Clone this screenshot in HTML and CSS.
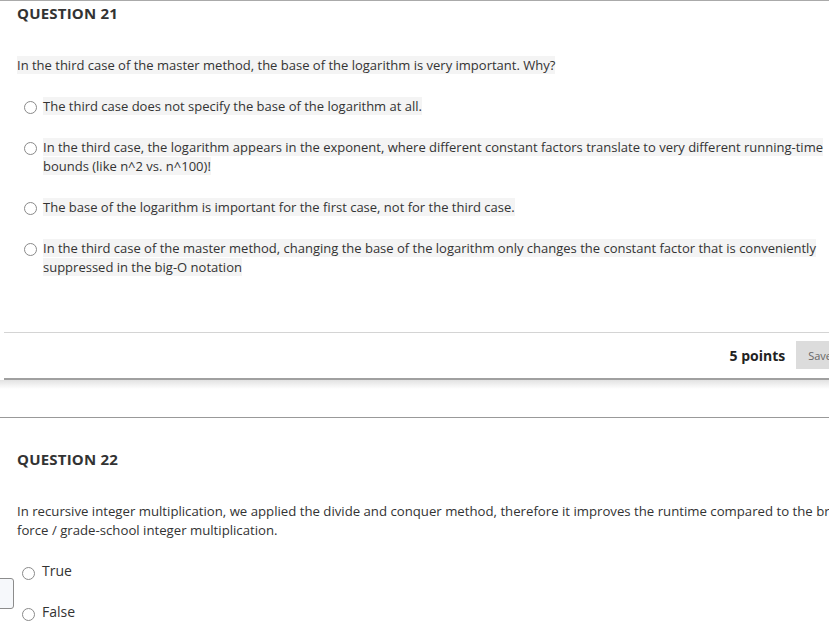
FILE: index.html
```html
<!DOCTYPE html>
<html>
<head>
<meta charset="utf-8">
<link rel="stylesheet" href="styles.css">
</head>
<body>
<div class="page">
  <section class="question q21">
    <h2 class="q-title">QUESTION 21</h2>
    <p class="q-text"><span class="hl">In the third case of the master method, the base of the logarithm is very important. Why?</span></p>
    <ul class="options">
      <li class="option"><span class="radio"></span><span class="opt-text"><span class="hl">The third case does not specify the base of the logarithm at all.</span></span></li>
      <li class="option"><span class="radio"></span><span class="opt-text"><span class="hl">In the third case, the logarithm appears in the exponent, where different constant factors translate to very different running-time</span><br><span class="hl">bounds (like n^2 vs. n^100)!</span></span></li>
      <li class="option"><span class="radio"></span><span class="opt-text"><span class="hl">The base of the logarithm is important for the first case, not for the third case.</span></span></li>
      <li class="option"><span class="radio"></span><span class="opt-text"><span class="hl">In the third case of the master method, changing the base of the logarithm only changes the constant factor that is conveniently</span><br><span class="hl">suppressed in the big-O notation</span></span></li>
    </ul>
  </section>
  <div class="q-footer">
    <span class="points">5 points</span>
    <button class="save-btn">Save Answer</button>
  </div>
  <div class="spacer"></div>
  <section class="question q22">
    <h2 class="q-title">QUESTION 22</h2>
    <p class="q-text">In recursive integer multiplication, we applied the divide and conquer method, therefore it improves the runtime compared to the brute<br>force / grade-school integer multiplication.</p>
    <ul class="options tf">
      <li class="option"><span class="radio"></span><span class="opt-text">True</span></li>
      <li class="option"><span class="radio"></span><span class="opt-text">False</span></li>
    </ul>
  </section>
  <div class="side-tab"></div>
</div>
</body>
</html>
```
FILE: styles.css
```css
html, body {
  margin: 0;
  padding: 0;
  background: #fff;
  overflow: hidden;
}
body {
  font-family: "Open Sans", "Liberation Sans", sans-serif;
  color: #333;
  font-size: 13px;
}
.page {
  position: relative;
  width: 880px;
  height: 637px;
  border-top: 1px solid #aaa;
}
.question {
  padding-left: 17px;
}
.q-title {
  margin: 2px 0 0;
  font-size: 15px;
  font-weight: 700;
  line-height: 20px;
  color: #333;
  letter-spacing: 0.2px;
}
.q-text {
  margin: 33px 0 0;
  line-height: 19px;
}
.hl {
  background: #f4f4f4;
}
.options {
  list-style: none;
  margin: 22px 0 0;
  padding: 0 0 0 7px;
  display: flex;
  flex-direction: column;
  gap: 22px;
}
.option {
  display: flex;
  align-items: flex-start;
  gap: 6px;
  line-height: 19px;
}
.radio {
  flex: none;
  width: 11px;
  height: 11px;
  border: 1px solid #8a8a8a;
  border-radius: 50%;
  background: #fff;
  margin-top: 4px;
}
.q-footer {
  margin: 55px 0 0 4px;
  border-top: 1px solid #d4d4d4;
  border-bottom: 2px solid #a0a0a0;
  display: flex;
  justify-content: flex-end;
  align-items: center;
  gap: 11px;
  padding: 8px 20px 9px 0;
}
.points {
  font-weight: 700;
  font-size: 14px;
  color: #222;
}
.save-btn {
  border: none;
  background: #dcdcdc;
  color: #666;
  font-family: "Open Sans", "Liberation Sans", sans-serif;
  font-size: 11px;
  height: 28px;
  padding: 0 12px;
  margin-right: -25px;
}
.spacer {
  height: 37px;
  background: linear-gradient(#e2e2e2, #fff 9px);
  border-bottom: 1px solid #999;
}
.q22 .q-title {
  margin-top: 31px;
}
.q22 .q-text {
  margin-top: 33px;
  font-size: 13.2px;
}
.tf {
  padding-left: 5px;
  gap: 22px;
  margin-top: 21px;
}
.tf .option {
  font-size: 14px;
  gap: 7px;
}
.tf .radio {
  margin-top: 6px;
}
.side-tab {
  position: absolute;
  left: -4px;
  top: 577px;
  width: 16px;
  height: 29px;
  border: 1px solid #8c8c8c;
  border-radius: 3px;
  background: #f6f8fb;
}
```
